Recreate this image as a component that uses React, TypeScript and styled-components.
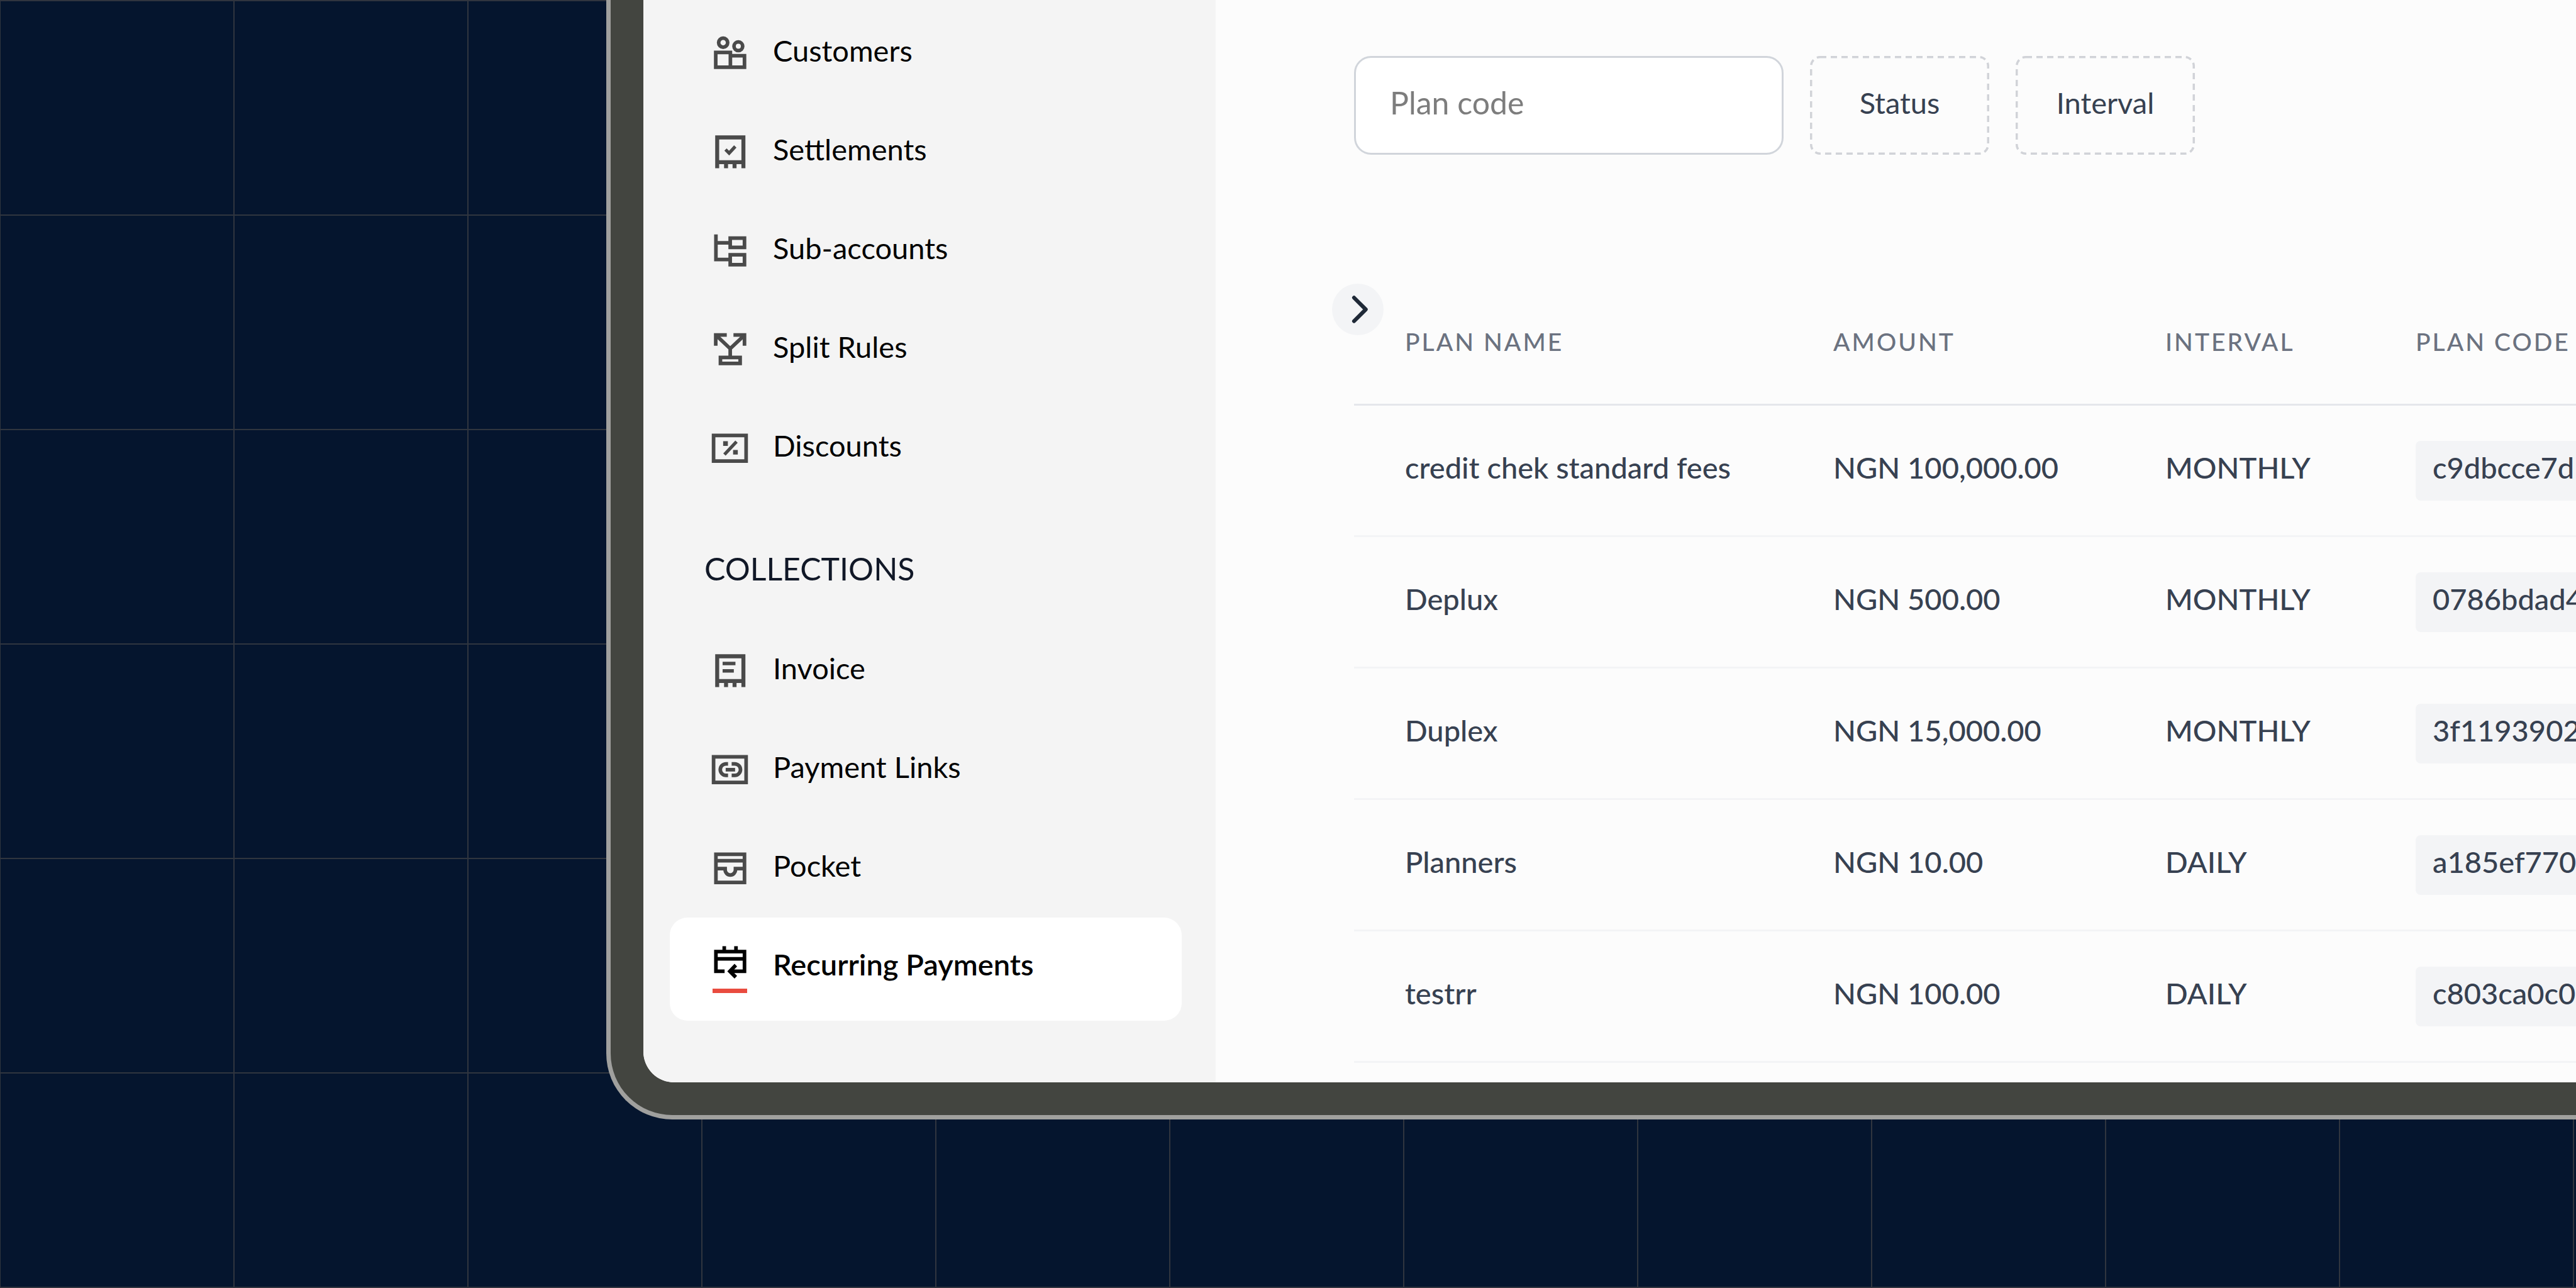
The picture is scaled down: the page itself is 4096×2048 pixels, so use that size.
import React from "react";
import styled, { createGlobalStyle, css } from "styled-components";

const color = {
  navy: "#05152e",
  gridLine: "#30353f",
  bezel: "#434540",
  bezelEdge: "#a0a09e",
  sidebar: "#f4f4f4",
  surface: "#fcfcfc",
  white: "#ffffff",
  black: "#000000",
  icon: "#4a4a4a",
  heading: "#111827",
  text: "#374151",
  muted: "#6b7280",
  placeholder: "#7d7d7d",
  inputBorder: "#d1d5db",
  line: "#e5e7eb",
  lineSoft: "#f3f4f6",
  pill: "#f3f4f6",
  accent: "#e94b3f",
};

const dashedBorder = `url("data:image/svg+xml,%3Csvg xmlns='http://www.w3.org/2000/svg'%3E%3Crect width='100%25' height='100%25' rx='16' fill='none' stroke='%23d1d3d8' stroke-width='7' stroke-dasharray='10 7'/%3E%3C/svg%3E")`;

const GlobalStyle = createGlobalStyle`
  *, *::before, *::after { box-sizing: border-box; }
  body {
    margin: 0;
    overflow-x: hidden;
    background: ${color.navy};
    font-family: Lato, "Open Sans", sans-serif;
    font-size: 47px;
    line-height: 60px;
  }
`;

const Backdrop = styled.div`
  min-height: 100vh;
  overflow: hidden;
  background-color: ${color.navy};
  background-image:
    linear-gradient(to right, ${color.gridLine} 2px, transparent 2px),
    linear-gradient(to bottom, ${color.gridLine} 2px, transparent 2px);
  background-size: 372px 341px;
  background-position: -1px 0;
`;

const Device = styled.div`
  margin-left: 964px;
  padding: 0 0 52px 52px;
  background: ${color.bezel};
  border: solid ${color.bezelEdge};
  border-width: 0 0 7px 7px;
  border-bottom-left-radius: 105px;
`;

const Screen = styled.div`
  display: flex;
  overflow: hidden;
  border-bottom-left-radius: 49px;
  background: ${color.surface};
`;

const Sidebar = styled.nav`
  flex: none;
  width: 910px;
  padding: 6px 54px 98px 42px;
  background: ${color.sidebar};
`;

const NavList = styled.ul`
  list-style: none;
  margin: 0;
  padding: 0;
`;

const NavHeading = styled.h2`
  margin: 0;
  padding: 83px 55px 54px;
  font-size: 50px;
  line-height: 60px;
  font-weight: 400;
  color: ${color.heading};
`;

const NavLink = styled.a<{ $active?: boolean }>`
  display: flex;
  align-items: flex-start;
  gap: 34px;
  padding: 44px 61px;
  border-radius: 28px;
  color: ${color.black};
  text-decoration: none;
  ${(p) =>
    p.$active &&
    css`
      background: ${color.white};
      font-weight: 600;
    `}
`;

const NavIcon = styled.span<{ $active?: boolean }>`
  display: flex;
  flex-direction: column;
  align-items: center;
  color: ${(p) => (p.$active ? color.black : color.icon)};
`;

const Glyph = styled.svg`
  display: block;
  width: 69px;
  height: 69px;
  fill: none;
  stroke: currentColor;
  stroke-width: 2;
`;

const Underline = styled.span`
  width: 55px;
  height: 7px;
  background: ${color.accent};
`;

const Main = styled.main`
  flex: 1;
  min-width: 0;
  overflow: hidden;
  padding: 89px 0 0 220px;
`;

const Filters = styled.form`
  display: flex;
  gap: 42px;
`;

const SearchInput = styled.input`
  width: 683px;
  height: 157px;
  padding: 0 54px 10px;
  border: 3px solid ${color.inputBorder};
  border-radius: 27px;
  background: ${color.white};
  color: ${color.text};
  font-family: inherit;
  font-size: 50px;
  &::placeholder {
    color: ${color.placeholder};
    opacity: 1;
  }
`;

const FilterButton = styled.button`
  width: 285px;
  height: 157px;
  padding: 0 0 10px;
  border: 0;
  border-radius: 16px;
  background: ${dashedBorder};
  color: ${color.text};
  font-family: inherit;
  font-size: 47px;
`;

const TableArea = styled.section`
  position: relative;
  margin-top: 203px;
`;

const ScrollButton = styled.button`
  position: absolute;
  top: 2px;
  left: -35px;
  display: flex;
  align-items: center;
  justify-content: center;
  width: 82px;
  height: 82px;
  padding: 0 0 0 4px;
  border: 0;
  border-radius: 50%;
  background: ${color.pill};
  color: #1f2937;
`;

const Chevron = styled.svg`
  width: 64px;
  height: 64px;
  fill: none;
  stroke: currentColor;
  stroke-width: 2.3;
  stroke-linecap: round;
  stroke-linejoin: round;
`;

const Table = styled.table`
  width: 100%;
  table-layout: fixed;
  border-collapse: separate;
  border-spacing: 0;
  color: ${color.text};
  font-weight: 500;
  white-space: nowrap;
`;

const Col = styled.col<{ $width?: number }>`
  width: ${(p) => (p.$width ? `${p.$width}px` : "auto")};
`;

const HeadCell = styled.th`
  height: 196px;
  padding: 0 0 5px 81px;
  border-bottom: 3px solid ${color.line};
  color: ${color.muted};
  font-size: 39px;
  font-weight: 500;
  letter-spacing: 3px;
  text-align: left;
  text-transform: uppercase;
`;

const Cell = styled.td<{ $code?: boolean }>`
  height: 209px;
  padding: 0 0 ${(p) => (p.$code ? 0 : 10)}px 81px;
  border-bottom: 3px solid ${color.lineSoft};
`;

const CodePill = styled.code`
  display: block;
  width: max-content;
  padding: 12px 27px 23px;
  border-radius: 8px;
  background: ${color.pill};
  font: inherit;
`;

type IconName =
  | "customers"
  | "settlements"
  | "subAccounts"
  | "splitRules"
  | "discounts"
  | "invoice"
  | "links"
  | "pocket"
  | "recurring";

const receipt = "M5 21V4H19.5V21M5 17.7H19.5M9.9 17.7V21M14.6 17.7V21";

const shapes: Record<IconName, React.ReactNode> = {
  customers: (
    <>
      <circle cx="8.3" cy="6.2" r="2.5" />
      <circle cx="16.7" cy="8.2" r="2.4" />
      <path d="M4.2 11.6H12.3V19.8H4.2ZM12.3 13.4H20.1V19.8H12.3Z" />
    </>
  ),
  settlements: (
    <>
      <path d={receipt} strokeWidth="2.2" />
      <path d="M9.6 10.7L11.6 12.7L15 9" strokeWidth="1.8" />
    </>
  ),
  subAccounts: (
    <path d="M4.3 3V16.9H12.2M4.3 7.7H12.2M12.2 5.1H20.1V10.2H12.2ZM12.2 14.3H20.1V19.8H12.2Z" />
  ),
  splitRules: (
    <path d="M4.2 10V4H10.3M20.1 10V4H14M4.4 4.2L12.2 11.6L20 4.2M12.2 11.2V16.5M6.8 16.5H17.7V19.8H6.8Z" />
  ),
  discounts: (
    <>
      <path d="M3 5H21V19.2H3Z" />
      <path d="M9 15.6L15.7 8.4" strokeWidth="1.8" />
      <path d="M8.3 8.2H10.9V10.8H8.3ZM13.8 13H16.4V15.6H13.8Z" fill="currentColor" stroke="none" />
    </>
  ),
  invoice: (
    <>
      <path d={receipt} strokeWidth="2.2" />
      <path d="M8 8H15.1M8 12.1H14.2" strokeWidth="1.9" />
    </>
  ),
  links: (
    <path d="M3 5H21V19.2H3ZM11 8.9H9.9A3.2 3.2 0 0 0 9.9 15.3H11M13 8.9H14.7A3.2 3.2 0 0 1 14.7 15.3H13M9.7 12.1H14.9" />
  ),
  pocket: (
    <path d="M4.3 4.3H20.1V19.9H4.3ZM4.3 7.9H20.1M4.3 12.2H9.4V12.9A2.85 2.85 0 0 0 15.1 12.9V12.2H20.1" />
  ),
  recurring: (
    <path d="M9.1 14.4H4.3V3.5H20.1V14.4H12.4M4.3 7.5H20.1M8.9 0.5V4.5M15.4 0.5V4.5M15.3 11L12 14.4L15.3 17.7" />
  ),
};

type Item = { label: string; icon: IconName; active?: boolean };

const general: Item[] = [
  { label: "Customers", icon: "customers" },
  { label: "Settlements", icon: "settlements" },
  { label: "Sub-accounts", icon: "subAccounts" },
  { label: "Split Rules", icon: "splitRules" },
  { label: "Discounts", icon: "discounts" },
];

const collections: Item[] = [
  { label: "Invoice", icon: "invoice" },
  { label: "Payment Links", icon: "links" },
  { label: "Pocket", icon: "pocket" },
  { label: "Recurring Payments", icon: "recurring", active: true },
];

const plans = [
  { name: "credit chek standard fees", amount: "NGN 100,000.00", interval: "MONTHLY", code: "c9dbcce7d" },
  { name: "Deplux", amount: "NGN 500.00", interval: "MONTHLY", code: "0786bdad4" },
  { name: "Duplex", amount: "NGN 15,000.00", interval: "MONTHLY", code: "3f11939022" },
  { name: "Planners", amount: "NGN 10.00", interval: "DAILY", code: "a185ef7700" },
  { name: "testrr", amount: "NGN 100.00", interval: "DAILY", code: "c803ca0c0" },
];

function NavItems({ items }: { items: Item[] }) {
  return (
    <NavList>
      {items.map(({ label, icon, active }) => (
        <li key={label}>
          <NavLink href="#" $active={active} aria-current={active ? "page" : undefined}>
            <NavIcon $active={active}>
              <Glyph viewBox="0 0 24 24" aria-hidden="true">
                {shapes[icon]}
              </Glyph>
              {active && <Underline />}
            </NavIcon>
            {label}
          </NavLink>
        </li>
      ))}
    </NavList>
  );
}

export default function App() {
  return (
    <Backdrop>
      <GlobalStyle />
      <Device>
        <Screen>
          <Sidebar>
            <NavItems items={general} />
            <NavHeading>COLLECTIONS</NavHeading>
            <NavItems items={collections} />
          </Sidebar>
          <Main>
            <Filters>
              <SearchInput type="text" placeholder="Plan code" aria-label="Plan code" />
              <FilterButton type="button">Status</FilterButton>
              <FilterButton type="button">Interval</FilterButton>
            </Filters>
            <TableArea>
              <Table>
                <colgroup>
                  <Col $width={681} />
                  <Col $width={528} />
                  <Col $width={398} />
                  <Col />
                </colgroup>
                <thead>
                  <tr>
                    <HeadCell>Plan name</HeadCell>
                    <HeadCell>Amount</HeadCell>
                    <HeadCell>Interval</HeadCell>
                    <HeadCell>Plan code</HeadCell>
                  </tr>
                </thead>
                <tbody>
                  {plans.map((plan) => (
                    <tr key={plan.name}>
                      <Cell>{plan.name}</Cell>
                      <Cell>{plan.amount}</Cell>
                      <Cell>{plan.interval}</Cell>
                      <Cell $code>
                        <CodePill>{plan.code}</CodePill>
                      </Cell>
                    </tr>
                  ))}
                </tbody>
              </Table>
              <ScrollButton type="button" aria-label="Scroll table">
                <Chevron viewBox="0 0 24 24" aria-hidden="true">
                  <path d="M9 5l7 7-7 7" />
                </Chevron>
              </ScrollButton>
            </TableArea>
          </Main>
        </Screen>
      </Device>
    </Backdrop>
  );
}
